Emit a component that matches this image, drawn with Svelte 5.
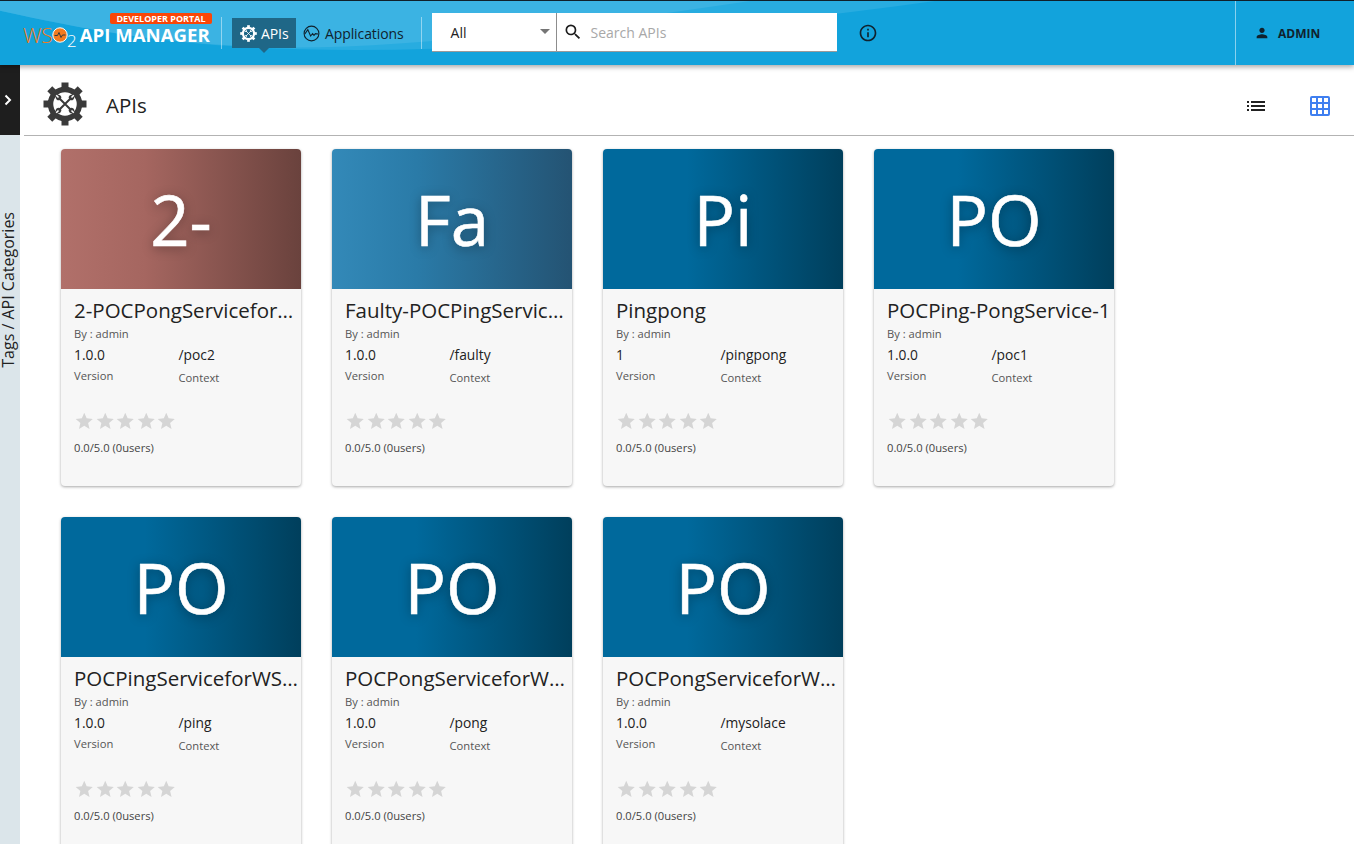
<script>
  const apis = [
    { letters: '2-', name: '2-POCPongServiceforWSO2Gateway', version: '1.0.0', context: '/poc2', tone: 'rose' },
    { letters: 'Fa', name: 'Faulty-POCPingServiceforWSO2', version: '1.0.0', context: '/faulty', tone: 'steel' },
    { letters: 'Pi', name: 'Pingpong', version: '1', context: '/pingpong', tone: 'blue' },
    { letters: 'PO', name: 'POCPing-PongService-1', version: '1.0.0', context: '/poc1', tone: 'blue' },
    { letters: 'PO', name: 'POCPingServiceforWSO2Gateway', version: '1.0.0', context: '/ping', tone: 'blue' },
    { letters: 'PO', name: 'POCPongServiceforWSO2Gateway', version: '1.0.0', context: '/pong', tone: 'blue' },
    { letters: 'PO', name: 'POCPongServiceforWSO2Solace', version: '1.0.0', context: '/mysolace', tone: 'blue' }
  ];
  const stars = [0, 1, 2, 3, 4];
  const teeth = [0, 45, 90, 135, 180, 225, 270, 315];
  const heads = [[15.5, 15.5, 45], [28.5, 15.5, 135], [28.5, 28.5, 225], [15.5, 28.5, 315]];
</script>

{#snippet gear(size, tint, cut)}
  <svg width={size} height={size} viewBox="0 0 44 44" fill={tint}>
    {#each teeth as a}
      <rect x="18.5" y="0.5" width="7" height="8" transform="rotate({a} 22 22)" />
    {/each}
    <circle cx="22" cy="22" r="14.5" fill="none" stroke={tint} stroke-width="5.5" />
    <path d="M16 16 L28 28 M28 16 L16 28" fill="none" stroke={tint} stroke-width="2" />
    {#each heads as [x, y, r]}
      <g transform="translate({x} {y}) rotate({r})">
        <circle r="2.7" />
        <rect x="-3.2" y="-0.8" width="3.2" height="1.6" fill={cut} />
      </g>
    {/each}
  </svg>
{/snippet}

<div class="page">
  <header class="topbar">
    <svg class="swoosh" viewBox="0 0 1354 65" preserveAspectRatio="none">
      <path d="M0 10 C90 30 170 46 300 49 C500 54 700 32 935 0 L0 0 Z" fill="#28ace0" />
      <path d="M0 10 C90 30 170 45 280 47 C420 49 600 22 750 0 L0 0 Z" fill="#3bb3e3" />
    </svg>

    <div class="brand">
      <span class="wso">WS</span><span class="o-dot"><svg width="16" height="16" viewBox="0 0 16 16"><circle cx="8" cy="8" r="7.2" fill="#f47b20" stroke="#fff" stroke-width="1" /><path d="M2.5 8.5 H5.5 L7 5.5 L9 10.5 L10.5 8 H13.5" fill="none" stroke="#3a3a3a" stroke-width="1" /></svg></span><span class="two">2</span>
      <span class="product">API MANAGER</span>
      <span class="portal">DEVELOPER PORTAL</span>
    </div>

    <div class="divider"></div>

    <nav class="links">
      <a class="link active">
        <span class="gear-small">{@render gear(17, '#fff', '#1f6787')}</span>
        APIs
      </a>
      <a class="link">
        <svg width="17" height="17" viewBox="0 0 17 17" fill="none" stroke="#10222e" stroke-width="1.1">
          <circle cx="8.5" cy="8.5" r="7.4" />
          <path d="M1.8 9 L4.8 4.6 L7.6 11 L9.6 8.6 L11 10.4 L12.4 8.6 L15.2 9" />
        </svg>
        Applications
      </a>
    </nav>

    <div class="divider second"></div>

    <div class="search">
      <div class="select">
        <span>All</span>
        <i class="caret"></i>
      </div>
      <div class="query">
        <svg width="20" height="20" viewBox="0 0 24 24" fill="#1c1c1c">
          <path d="M15.5 14h-.79l-.28-.27A6.47 6.47 0 0 0 16 9.5 6.5 6.5 0 1 0 9.5 16c1.61 0 3.09-.59 4.23-1.57l.27.28v.79l5 4.99L20.49 19l-4.99-5zm-6 0C7.01 14 5 11.99 5 9.5S7.01 5 9.5 5 14 7.01 14 9.5 11.99 14 9.5 14z" />
        </svg>
        <span>Search APIs</span>
      </div>
    </div>

    <svg class="info" width="20" height="20" viewBox="0 0 24 24" fill="#10222e">
      <path d="M11 7h2v2h-2zm0 4h2v6h-2zm1-9C6.48 2 2 6.48 2 12s4.48 10 10 10 10-4.48 10-10S17.52 2 12 2zm0 18c-4.41 0-8-3.59-8-8s3.59-8 8-8 8 3.59 8 8-3.59 8-8 8z" />
    </svg>

    <div class="user">
      <svg width="16" height="16" viewBox="0 0 24 24" fill="#10222e">
        <path d="M12 12c2.21 0 4-1.79 4-4s-1.79-4-4-4-4 1.79-4 4 1.79 4 4 4zm0 2c-2.67 0-8 1.34-8 4v2h16v-2c0-2.66-5.33-4-8-4z" />
      </svg>
      <span>ADMIN</span>
    </div>
  </header>

  <div class="body">
    <aside class="side">
      <div class="toggle">
        <svg width="12" height="12" viewBox="0 0 12 12" fill="none" stroke="#fff" stroke-width="2"><path d="M3.5 1.5 L8 6 L3.5 10.5" /></svg>
      </div>
      <div class="side-label"><span>Tags / API Categories</span></div>
    </aside>

    <main class="content">
      <div class="title-row">
        <span class="title-icon">{@render gear(44, '#3a3a3a', '#fff')}</span>
        <h1>APIs</h1>
        <div class="views">
          <svg width="24" height="24" viewBox="0 0 24 24" fill="#212121">
            <path d="M3 13h2v-2H3v2zm0 4h2v-2H3v2zm0-8h2V7H3v2zm4 4h14v-2H7v2zm0 4h14v-2H7v2zM7 7v2h14V7H7z" />
          </svg>
          <svg width="24" height="24" viewBox="0 0 24 24" fill="#3f7ff0">
            <path d="M4 2h16a2 2 0 0 1 2 2v16a2 2 0 0 1-2 2H4a2 2 0 0 1-2-2V4a2 2 0 0 1 2-2zm0 2v4h4V4H4zm6 0v4h4V4h-4zm6 0v4h4V4h-4zM4 10v4h4v-4H4zm6 0v4h4v-4h-4zm6 0v4h4v-4h-4zM4 16v4h4v-4H4zm6 0v4h4v-4h-4zm6 0v4h4v-4h-4z" />
          </svg>
        </div>
      </div>

      <div class="grid">
        {#each apis as api}
          <article class="card">
            <div class="thumb {api.tone}"><span>{api.letters}</span></div>
            <div class="details">
              <h2>{api.name}</h2>
              <p class="by">By : admin</p>
              <div class="meta">
                <div class="col">
                  <span class="value">{api.version}</span>
                  <span class="label">Version</span>
                </div>
                <div class="col context">
                  <span class="value">{api.context}</span>
                  <span class="label">Context</span>
                </div>
              </div>
              <div class="stars">
                {#each stars as s}
                  <svg viewBox="0 0 24 24" fill="#d5d5d5">
                    <path d="M12 17.27 18.18 21l-1.64-7.03L22 9.24l-7.19-.61L12 2 9.19 8.63 2 9.24l5.46 4.73L5.82 21z" />
                  </svg>
                {/each}
              </div>
              <p class="rating">0.0/5.0 (0users)</p>
            </div>
          </article>
        {/each}
      </div>
    </main>
  </div>
</div>

<style>
  :global(body) {
    margin: 0;
    font-family: "Open Sans", "Noto Sans", sans-serif;
    background: #fff;
  }

  .page {
    height: 844px;
    overflow: hidden;
    display: flex;
    flex-direction: column;
  }

  .topbar {
    position: relative;
    z-index: 2;
    flex: none;
    box-sizing: border-box;
    height: 65px;
    display: flex;
    align-items: center;
    padding-left: 23px;
    background: #12a3dc;
    border-top: 1px solid #10202a;
    box-shadow: 0 2px 5px rgba(0, 0, 0, 0.35);
  }

  .swoosh {
    position: absolute;
    inset: 0;
    width: 100%;
    height: 100%;
  }

  .brand,
  .divider,
  .links,
  .search,
  .info,
  .user {
    position: relative;
  }

  .brand {
    display: flex;
    align-items: center;
    width: 189px;
    height: 100%;
  }

  .wso {
    font-size: 21px;
    font-weight: 300;
    color: #f47b20;
    letter-spacing: -0.6px;
    margin-top: 3px;
  }

  .o-dot {
    display: flex;
    margin-top: 3px;
  }

  .two {
    font-size: 17px;
    font-weight: 300;
    color: #fff;
    margin: 14px 3px 0 -1px;
  }

  .product {
    font-size: 18.6px;
    font-weight: 700;
    color: #fff;
    white-space: nowrap;
    margin-top: 3px;
  }

  .portal {
    position: absolute;
    left: 87px;
    top: 12px;
    width: 102px;
    height: 11px;
    line-height: 11px;
    text-align: center;
    background: #fb4607;
    color: #fff;
    font-size: 9px;
    font-weight: 700;
    border-radius: 2px;
    white-space: nowrap;
  }

  .divider {
    width: 1px;
    height: 32px;
    margin: 0 10px 0 9px;
    background: rgba(255, 255, 255, 0.45);
  }

  .divider.second {
    margin: 0 10px 0 17px;
  }

  .links {
    display: flex;
    gap: 7px;
  }

  .link {
    position: relative;
    display: flex;
    align-items: center;
    gap: 5px;
    height: 30px;
    color: #10222e;
    font-size: 14px;
    letter-spacing: -0.1px;
  }

  .link.active {
    width: 64px;
    box-sizing: border-box;
    padding-left: 8px;
    gap: 4px;
    background: #1f6787;
    color: #fff;
    font-weight: 500;
  }

  .link.active::after {
    content: "";
    position: absolute;
    left: 27px;
    bottom: -5px;
    border: 5px solid transparent;
    border-bottom: 0;
    border-top-color: #1f6787;
  }

  .gear-small {
    display: flex;
  }

  .search {
    display: flex;
    width: 405px;
    height: 39px;
    margin-top: -1px;
    background: #fff;
    border-bottom: 1px solid #9a9a9a;
    box-sizing: border-box;
  }

  .select {
    position: relative;
    box-sizing: border-box;
    width: 125px;
    display: flex;
    align-items: center;
    padding-left: 19px;
    font-size: 14px;
    color: #222;
    border-right: 1px solid #8d8d8d;
  }

  .caret {
    position: absolute;
    right: 6px;
    top: 16px;
    border-left: 5px solid transparent;
    border-right: 5px solid transparent;
    border-top: 5px solid #757575;
  }

  .query {
    display: flex;
    align-items: center;
    gap: 8px;
    padding-left: 6px;
    font-size: 14px;
    color: #a8a8a8;
  }

  .info {
    margin-left: 21px;
  }

  .user {
    position: relative;
    margin-left: auto;
    box-sizing: border-box;
    width: 119px;
    height: 100%;
    padding-left: 18px;
    display: flex;
    align-items: center;
    gap: 8px;
    border-left: 1px solid rgba(255, 255, 255, 0.5);
    color: #10222e;
    font-size: 12px;
    font-weight: 700;
  }

  .body {
    flex: 1;
    display: flex;
    min-height: 0;
  }

  .side {
    flex: none;
    width: 20px;
    display: flex;
    flex-direction: column;
    background: #dbe5ea;
  }

  .toggle {
    height: 70px;
    background: #1e1e1e;
    display: flex;
    align-items: center;
    padding-left: 2px;
    flex: none;
  }

  .side-label {
    display: flex;
    justify-content: center;
    padding-top: 77px;
    margin-right: 4px;
  }

  .side-label span {
    writing-mode: vertical-rl;
    transform: rotate(180deg);
    font-size: 16px;
    line-height: 16px;
    color: #222;
    white-space: nowrap;
  }

  .content {
    flex: 1;
    min-width: 0;
  }

  .title-row {
    box-sizing: border-box;
    height: 71px;
    margin-left: 4px;
    padding-top: 8px;
    display: flex;
    align-items: center;
    border-bottom: 1px solid #b3b3b3;
  }

  .title-icon {
    display: flex;
    margin-left: 19px;
  }

  h1 {
    margin: 2px 0 0 19px;
    font-size: 20.5px;
    font-weight: 400;
    color: #222;
  }

  .views {
    margin-left: auto;
    margin-top: 4px;
    display: flex;
    gap: 40px;
    padding-right: 22px;
  }

  .grid {
    display: grid;
    grid-template-columns: repeat(4, 240px);
    column-gap: 31px;
    row-gap: 31px;
    padding: 13px 0 0 41px;
  }

  .card {
    height: 337px;
    background: #f7f7f7;
    border-radius: 4px;
    box-shadow: 0 1px 3px rgba(0, 0, 0, 0.35);
    overflow: hidden;
  }

  .thumb {
    height: 140px;
    display: flex;
    align-items: center;
    justify-content: center;
    color: #fff;
    font-size: 69px;
    text-shadow: 0 2px 12px rgba(0, 0, 0, 0.35);
    -webkit-text-stroke: 0.6px #fff;
  }

  .thumb.blue {
    background: linear-gradient(to right, #00699c, #00699c 35%, #003f5c);
  }

  .thumb.steel {
    background: linear-gradient(to right, #3389b8, #2a7ba8 35%, #245373);
  }

  .thumb.rose {
    background: linear-gradient(to right, #b1706a, #a56660 35%, #6a423d);
  }

  .details {
    padding: 6px 0 0 13px;
  }

  h2 {
    margin: 0;
    width: 230px;
    font-size: 20.5px;
    line-height: 30px;
    font-weight: 400;
    color: #222;
    white-space: nowrap;
    overflow: hidden;
    text-overflow: ellipsis;
  }

  .by {
    margin: 1px 0 0;
    font-size: 11.2px;
    line-height: 15px;
    color: #555;
  }

  .meta {
    display: flex;
    margin-top: 4px;
  }

  .col {
    display: flex;
    flex-direction: column;
    width: 104.5px;
  }

  .value {
    font-size: 13.8px;
    line-height: 19px;
    color: #222;
  }

  .label {
    margin-top: 4px;
    font-size: 11.2px;
    line-height: 15px;
    color: #555;
  }

  .context .label {
    margin-top: 6px;
  }

  .stars {
    display: flex;
    margin-top: 26px;
    height: 20px;
  }

  .stars svg {
    width: 20.5px;
    height: 20.5px;
  }

  .rating {
    margin: 9px 0 0;
    font-size: 11.2px;
    line-height: 15px;
    color: #444;
  }
</style>
